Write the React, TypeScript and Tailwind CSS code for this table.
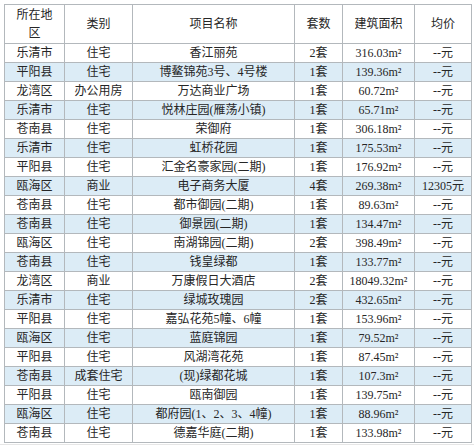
import React from "react";

type Row = [string, string, string, string, string, string];

const rows: Row[] = [
  ["乐清市", "住宅", "香江丽苑", "2套", "316.03", "--元"],
  ["平阳县", "住宅", "博鳌锦苑3号、4号楼", "1套", "139.36", "--元"],
  ["龙湾区", "办公用房", "万达商业广场", "1套", "60.72", "--元"],
  ["乐清市", "住宅", "悦林庄园(雁荡小镇)", "1套", "65.71", "--元"],
  ["苍南县", "住宅", "荣御府", "1套", "306.18", "--元"],
  ["乐清市", "住宅", "虹桥花园", "1套", "175.53", "--元"],
  ["平阳县", "住宅", "汇金名豪家园(二期)", "1套", "176.92", "--元"],
  ["瓯海区", "商业", "电子商务大厦", "4套", "269.38", "12305元"],
  ["苍南县", "住宅", "都市御园(二期)", "1套", "89.63", "--元"],
  ["苍南县", "住宅", "御景园(二期)", "1套", "134.47", "--元"],
  ["瓯海区", "住宅", "南湖锦园(二期)", "2套", "398.49", "--元"],
  ["苍南县", "住宅", "钱皇绿都", "1套", "133.77", "--元"],
  ["龙湾区", "商业", "万康假日大酒店", "2套", "18049.32", "--元"],
  ["乐清市", "住宅", "绿城玫瑰园", "2套", "432.65", "--元"],
  ["平阳县", "住宅", "嘉弘花苑5幢、6幢", "1套", "153.96", "--元"],
  ["瓯海区", "住宅", "蓝庭锦园", "1套", "79.52", "--元"],
  ["平阳县", "住宅", "风湖湾花苑", "1套", "87.45", "--元"],
  ["苍南县", "成套住宅", "(现)绿都花城", "1套", "107.3", "--元"],
  ["平阳县", "住宅", "瓯南御园", "1套", "139.75", "--元"],
  ["瓯海区", "住宅", "都府园(1、2、3、4幢)", "1套", "88.96", "--元"],
  ["苍南县", "住宅", "德嘉华庭(二期)", "1套", "133.98", "--元"],
];

const cell =
  "border border-[#b3b8bc] p-0 text-center align-middle whitespace-nowrap leading-[18px] h-[19px]";

export default function App() {
  return (
    <div
      className="w-[474px] h-[445px] bg-white text-[#262626] text-[12px] overflow-hidden"
      style={{ fontFamily: '"Liberation Serif", "Noto Sans CJK SC", serif' }}
    >
      <div className="pt-[4px] pl-[4px]">
        <table className="table-fixed border-collapse w-[467px]">
          <colgroup>
            <col className="w-[60px]" />
            <col className="w-[68px]" />
            <col className="w-[162px]" />
            <col className="w-[48px]" />
            <col className="w-[72px]" />
            <col className="w-[57px]" />
          </colgroup>
          <thead>
            <tr>
              <th className={`${cell} font-normal h-[39px]`}>
                所在地
                <br />区
              </th>
              <th className={`${cell} font-normal h-[39px]`}>类别</th>
              <th className={`${cell} font-normal h-[39px]`}>项目名称</th>
              <th className={`${cell} font-normal h-[39px]`}>套数</th>
              <th className={`${cell} font-normal h-[39px]`}>建筑面积</th>
              <th className={`${cell} font-normal h-[39px]`}>均价</th>
            </tr>
          </thead>
          <tbody>
            {rows.map((r, i) => (
              <tr key={i} className={i % 2 === 1 ? "bg-[#dcecf6]" : "bg-white"}>
                <td className={cell}>{r[0]}</td>
                <td className={cell}>{r[1]}</td>
                <td className={cell}>{r[2]}</td>
                <td className={cell}>{r[3]}</td>
                <td className={cell}>{r[4]}m²</td>
                <td className={cell}>{r[5]}</td>
              </tr>
            ))}
          </tbody>
        </table>
      </div>
      <div className="mt-[1px] h-[3px] bg-[#e6e6e6]" />
    </div>
  );
}
